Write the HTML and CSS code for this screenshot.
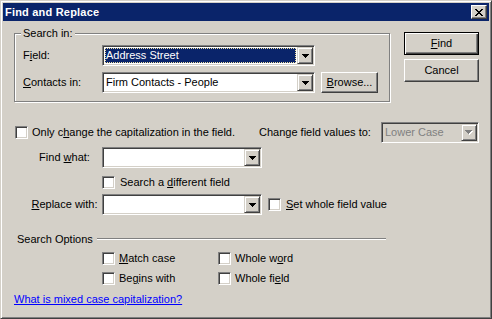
FILE: index.html
```html
<!DOCTYPE html>
<html lang="en">
<head>
  <meta charset="UTF-8">
  <title>Find and Replace</title>
  <link rel="stylesheet" href="styles.css">
</head>
<body>

  <div class="window">
    <div class="titlebar">
      <span class="title">Find and Replace</span>
      <span class="close">
        <svg width="8" height="7" viewBox="0 0 8 7"><path d="M0 0h2v1H0zM6 0h2v1H6zM1 1h2v1H1zM5 1h2v1H5zM2 2h4v1H2zM3 3h2v1H3zM2 4h4v1H2zM1 5h2v1H1zM5 5h2v1H5zM0 6h2v1H0zM6 6h2v1H6z" fill="#000"/></svg>
      </span>
    </div>

    <div class="dialog">
      <div class="top">
        <div class="group">
          <div class="legend">Search in:</div>
          <div class="grow first">
            <span class="glabel">F<u>i</u>eld:</span>
            <div class="combo wide">
              <span class="value selected">Address Street</span>
              <span class="drop"><svg width="7" height="4" viewBox="0 0 7 4"><path d="M0 0h7v1H0zM1 1h5v1H1zM2 2h3v1H2zM3 3h1v1H3z" fill="#000"/></svg></span>
            </div>
          </div>
          <div class="grow">
            <span class="glabel"><u>C</u>ontacts in:</span>
            <div class="combo wide">
              <span class="value">Firm Contacts - People</span>
              <span class="drop"><svg width="7" height="4" viewBox="0 0 7 4"><path d="M0 0h7v1H0zM1 1h5v1H1zM2 2h3v1H2zM3 3h1v1H3z" fill="#000"/></svg></span>
            </div>
            <span class="btn browse"><u>B</u>rowse...</span>
          </div>
        </div>
        <div class="actions">
          <span class="btn default"><u>F</u>ind</span>
          <span class="btn">Cancel</span>
        </div>
      </div>

      <div class="caprow">
        <span class="chk"></span>
        <span class="chktext">Only c<u>h</u>ange the capitalization in the field.</span>
        <span class="tolabel">Change field values to:</span>
        <div class="combo disabled case">
          <span class="value">Lower Case</span>
          <span class="drop"><svg width="8" height="5" viewBox="0 0 8 5"><path d="M1 1h7v1H1zM2 2h5v1H2zM3 3h3v1H3zM4 4h1v1H4z" fill="#fff"/><path d="M0 0h7v1H0zM1 1h5v1H1zM2 2h3v1H2zM3 3h1v1H3z" fill="#808080"/></svg></span>
        </div>
      </div>

      <div class="frow findrow">
        <span class="flabel">Find <u>w</u>hat:</span>
        <div class="combo short">
          <span class="value"></span>
          <span class="drop"><svg width="7" height="4" viewBox="0 0 7 4"><path d="M0 0h7v1H0zM1 1h5v1H1zM2 2h3v1H2zM3 3h1v1H3z" fill="#000"/></svg></span>
        </div>
      </div>
      <div class="frow diffrow">
        <span class="flabel"></span>
        <span class="chk"></span>
        <span class="chktext">Search a <u>d</u>ifferent field</span>
      </div>
      <div class="frow replrow">
        <span class="flabel"><u>R</u>eplace with:</span>
        <div class="combo short">
          <span class="value"></span>
          <span class="drop"><svg width="7" height="4" viewBox="0 0 7 4"><path d="M0 0h7v1H0zM1 1h5v1H1zM2 2h3v1H2zM3 3h1v1H3z" fill="#000"/></svg></span>
        </div>
        <span class="chk setchk"></span>
        <span class="chktext"><u>S</u>et whole field value</span>
      </div>

      <div class="section">
        <span class="section-title">Search Options</span>
        <span class="etch"></span>
      </div>
      <div class="options">
        <div class="opt"><span class="chk"></span><span class="chktext"><u>M</u>atch case</span></div>
        <div class="opt"><span class="chk"></span><span class="chktext">Whole w<u>o</u>rd</span></div>
        <div class="opt"><span class="chk"></span><span class="chktext">Be<u>g</u>ins with</span></div>
        <div class="opt"><span class="chk"></span><span class="chktext">Whole fi<u>e</u>ld</span></div>
      </div>

      <a class="help" href="#">What is mixed case capitalization?</a>
    </div>
  </div>

</body>
</html>
```

FILE: styles.css
```css
* {
  box-sizing: border-box;
}
body {
  margin: 0;
  background: #d4d0c8;
  font-family: "Liberation Sans", Arial, sans-serif;
  font-size: 11px;
  line-height: 13px;
  color: #000;
}
u {
  text-decoration-thickness: 1px;
  text-underline-offset: 1px;
}

/* window frame */
.window {
  width: 492px;
  height: 319px;
  background: #d4d0c8;
  border: 1px solid;
  border-color: #d4d0c8 #404040 #404040 #d4d0c8;
  box-shadow: inset 1px 1px #fff, inset -1px -1px #808080;
  padding: 2px;
}
.titlebar {
  height: 18px;
  background: #0a246a;
  display: flex;
  align-items: center;
  padding: 0 2px 0 2px;
}
.title {
  color: #fff;
  font-weight: bold;
  font-size: 11px;
  letter-spacing: 0.2px;
  flex: 1;
}
.close {
  width: 16px;
  height: 14px;
  background: #d4d0c8;
  border: 1px solid;
  border-color: #fff #404040 #404040 #fff;
  box-shadow: inset -1px -1px #808080;
  display: flex;
  align-items: center;
  justify-content: center;
}

.dialog {
  padding: 0 10px 0 11px;
}

/* top area */
.top {
  display: flex;
  align-items: flex-start;
}
.group {
  width: 376px;
  margin-top: 12px;
  height: 69px;
  border: 1px solid #808080;
  box-shadow: inset 1px 1px #fff, 1px 1px #fff;
  padding: 0 0 0 8px;
}
.legend {
  width: fit-content;
  margin: -7px 0 0 -2px;
  padding: 0 2px;
  background: #d4d0c8;
}
.grow {
  display: flex;
  align-items: center;
  margin-top: 6px;
}
.grow.first {
  margin-top: 5px;
}
.glabel {
  width: 79px;
}
.actions {
  margin: 11px 0 0 14px;
  display: flex;
  flex-direction: column;
  gap: 4px;
}

/* controls */
.btn {
  display: flex;
  align-items: center;
  justify-content: center;
  width: 75px;
  height: 23px;
  border: 1px solid;
  border-color: #fff #404040 #404040 #fff;
  box-shadow: inset -1px -1px #808080;
}
.btn.default {
  border-color: #000;
  box-shadow: inset 1px 1px #fff, inset -1px -1px #404040, inset -2px -2px #808080;
}
.btn.browse {
  width: 57px;
  height: 21px;
  margin-left: 6px;
}
.combo {
  display: flex;
  height: 21px;
  background: #fff;
  border: 1px solid;
  border-color: #808080 #fff #fff #808080;
  box-shadow: inset 1px 1px #404040, inset -1px -1px #d4d0c8;
  padding: 1px;
}
.combo.wide {
  width: 213px;
}
.combo.short {
  width: 160px;
}
.combo.case {
  width: 98px;
}
.combo .value {
  flex: 1;
  display: flex;
  align-items: center;
  padding-left: 2px;
  white-space: nowrap;
  overflow: hidden;
}
.combo .value.selected {
  margin: 1px;
  padding-left: 1px;
  background: #0a246a;
  color: #fff;
  outline: 1px dotted #f0e0a0;
  outline-offset: -1px;
}
.drop {
  width: 16px;
  height: 17px;
  background: #d4d0c8;
  border: 1px solid;
  border-color: #d4d0c8 #404040 #404040 #d4d0c8;
  box-shadow: inset 1px 1px #fff, inset -1px -1px #808080;
  display: flex;
  align-items: center;
  justify-content: center;
}
.combo.disabled {
  background: #d4d0c8;
  color: #808080;
}
.chk {
  width: 13px;
  height: 13px;
  flex: none;
  background: #fff;
  border: 1px solid;
  border-color: #808080 #fff #fff #808080;
  box-shadow: inset 1px 1px #404040, inset -1px -1px #d4d0c8;
}
.chktext {
  margin-left: 4px;
  white-space: nowrap;
}

/* capitalization row */
.caprow {
  display: flex;
  align-items: center;
  height: 21px;
  margin-top: 20px;
  padding-left: 1px;
}
.caprow .chktext {
  flex: 1;
}
.tolabel {
  width: 122px;
}

/* find / replace rows */
.frow {
  display: flex;
  align-items: center;
  padding-left: 16px;
}
.flabel {
  width: 69px;
  margin-right: 3px;
  text-align: center;
}
.findrow {
  margin-top: 4px;
}
.diffrow {
  margin-top: 8px;
}
.diffrow .chktext {
  margin-left: 5px;
}
.replrow {
  margin-top: 5px;
}
.setchk {
  margin-left: 6px;
}
.replrow .chktext {
  margin-left: 5px;
}

/* search options */
.section {
  display: flex;
  align-items: center;
  height: 14px;
  margin-top: 17px;
  padding-left: 3px;
}
.etch {
  flex: 1;
  height: 2px;
  margin: 0 93px 0 4px;
  border-top: 1px solid #808080;
  border-bottom: 1px solid #fff;
}
.options {
  display: grid;
  grid-template-columns: 116px auto;
  row-gap: 7px;
  margin: 6px 0 0 88px;
}
.opt {
  display: flex;
  align-items: center;
}
.help {
  display: block;
  width: fit-content;
  margin-top: 8px;
  color: #0000ff;
}
```
